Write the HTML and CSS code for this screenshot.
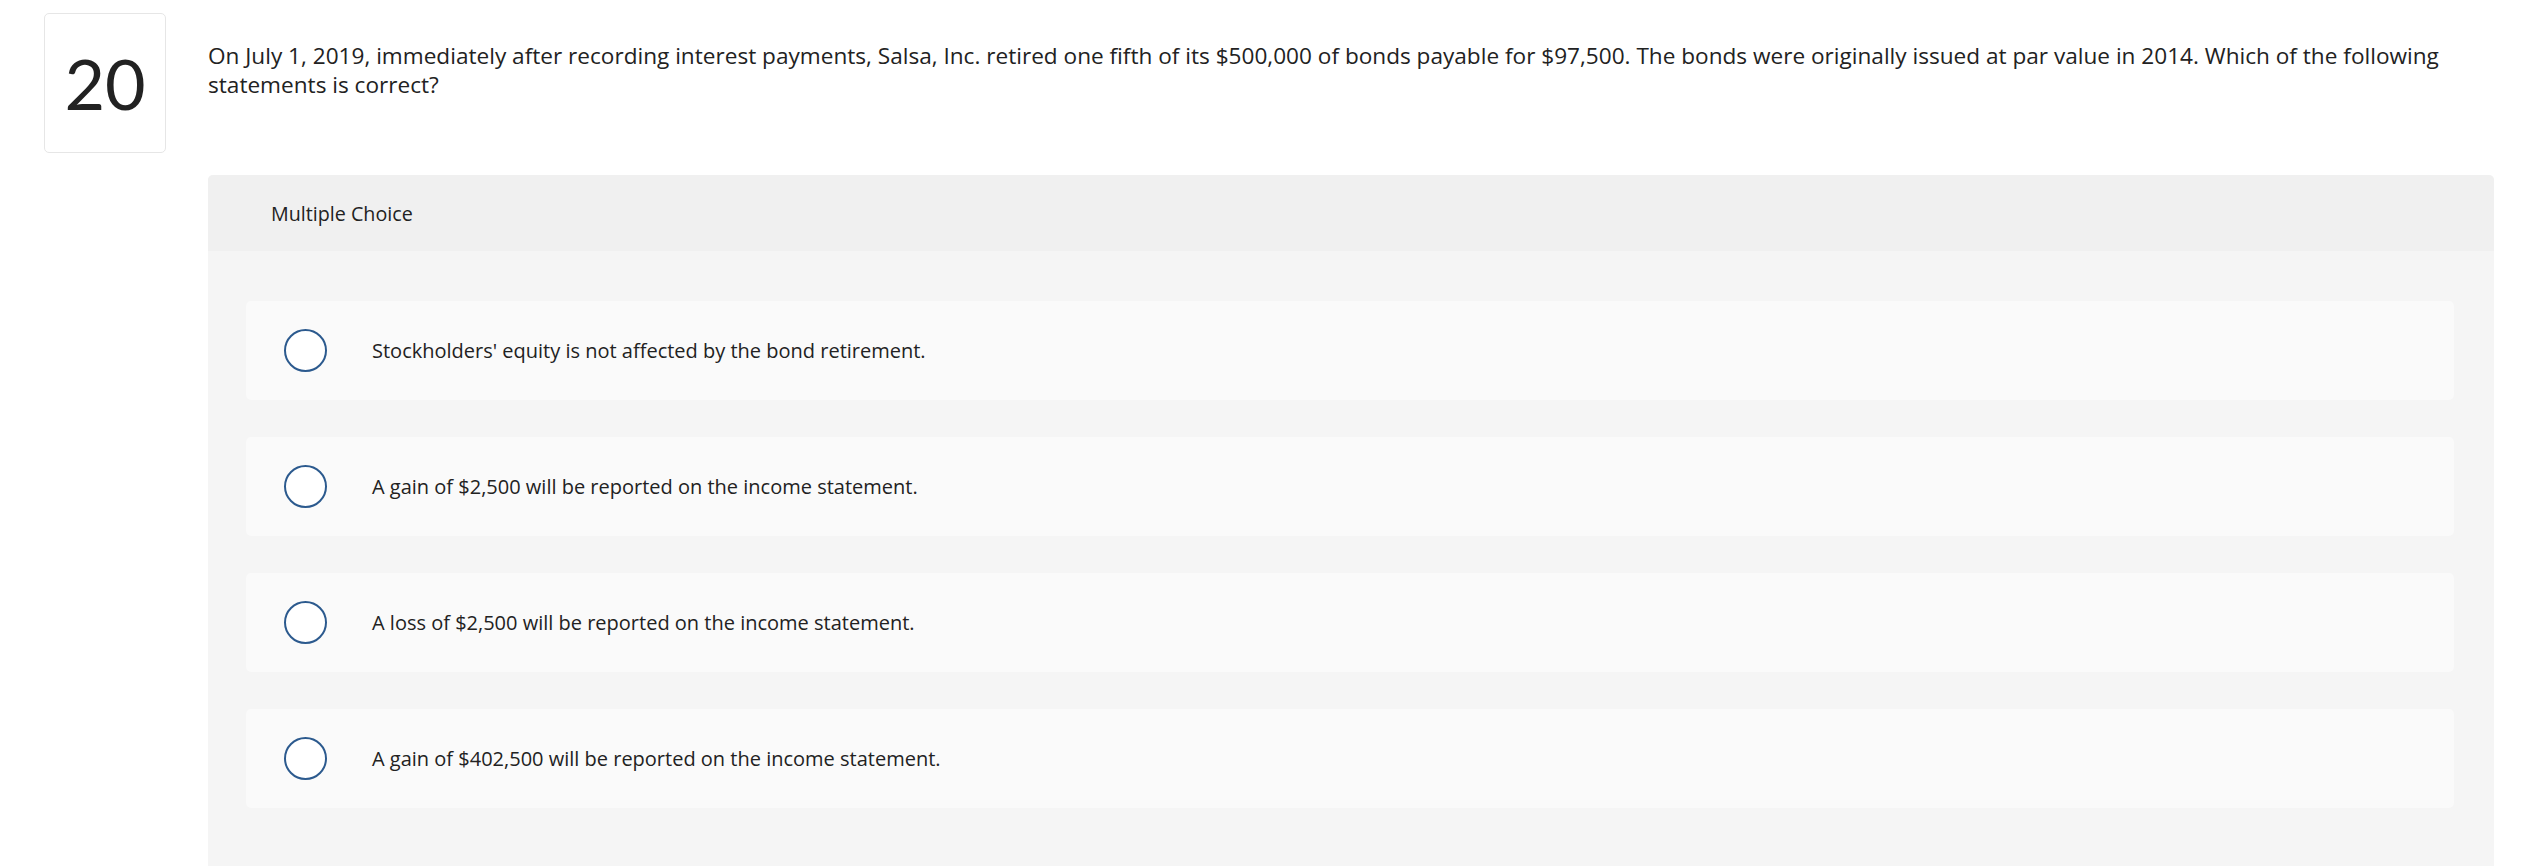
FILE: index.html
```html
<!DOCTYPE html>
<html>
<head>
<meta charset="utf-8">
<link rel="stylesheet" href="styles.css">
</head>
<body>
<div class="question">
  <div class="qnum">20</div>
  <div class="qmain">
    <p class="prompt">On July 1, 2019, immediately after recording interest payments, Salsa, Inc. retired one fifth of its $500,000 of bonds payable for $97,500. The bonds were originally issued at par value in 2014. Which of the following statements is correct?</p>
    <div class="panel">
      <div class="panel-head">Multiple Choice</div>
      <div class="panel-body">
        <label class="choice"><span class="radio"></span><span class="choice-text">Stockholders' equity is not affected by the bond retirement.</span></label>
        <label class="choice"><span class="radio"></span><span class="choice-text">A gain of $2,500 will be reported on the income statement.</span></label>
        <label class="choice"><span class="radio"></span><span class="choice-text">A loss of $2,500 will be reported on the income statement.</span></label>
        <label class="choice"><span class="radio"></span><span class="choice-text">A gain of $402,500 will be reported on the income statement.</span></label>
      </div>
    </div>
  </div>
</div>
</body>
</html>
```
FILE: styles.css
```css
html, body {
  margin: 0;
  padding: 0;
  background: #ffffff;
}
body {
  font-family: "Open Sans", Lato, sans-serif;
  color: #222222;
}
.question {
  display: flex;
  align-items: flex-start;
  padding: 13px 54px 0 44px;
  gap: 42px;
}
.qnum {
  flex: 0 0 auto;
  width: 120px;
  height: 138px;
  border: 1px solid #e6e6e6;
  border-radius: 5px;
  display: flex;
  align-items: center;
  justify-content: center;
  font-family: Lato, sans-serif;
  font-size: 70px;
  font-weight: 400;
  color: #222222;
}
.qmain {
  flex: 1 1 auto;
  min-width: 0;
}
.prompt {
  margin: 28px 0 0 0;
  font-size: 22.6px;
  line-height: 29px;
  color: #222222;
}
.panel {
  margin-top: 76px;
  background: #f5f5f5;
  border-radius: 5px 5px 0 0;
  overflow: hidden;
}
.panel-head {
  height: 76px;
  background: #f0f0f0;
  display: flex;
  align-items: center;
  padding-left: 63px;
  font-size: 19.7px;
  color: #222222;
}
.panel-body {
  padding: 50px 40px 60px 38px;
  display: flex;
  flex-direction: column;
  gap: 37px;
}
.choice {
  height: 99px;
  background: #fafafa;
  border-radius: 5px;
  display: flex;
  align-items: center;
  padding-left: 38px;
  gap: 45px;
}
.radio {
  flex: 0 0 auto;
  width: 39px;
  height: 39px;
  border: 2px solid #2c5a8e;
  border-radius: 50%;
  background: #ffffff;
}
.choice-text {
  font-size: 20px;
  color: #222222;
}
```
